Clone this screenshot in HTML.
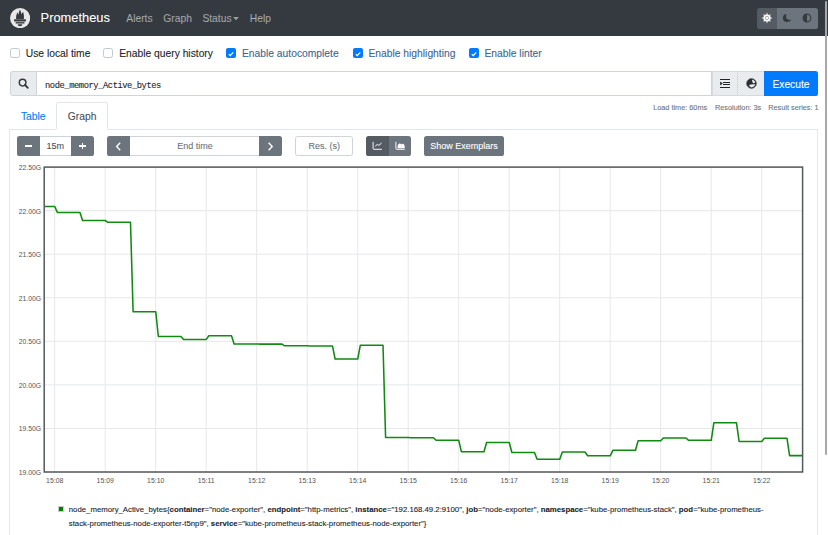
<!DOCTYPE html>
<html><head><meta charset="utf-8"><title>Prometheus Time Series Collection and Processing Server</title>
<style>
html,body{margin:0;padding:0;background:#fff;}
body{width:828px;height:535px;overflow:hidden;position:relative;font-family:"Liberation Sans",sans-serif;}
.t{position:absolute;line-height:1;white-space:nowrap;-webkit-text-stroke:0.1px currentColor;}
.b{position:absolute;box-sizing:border-box;}
svg{position:absolute;}
</style></head><body>
<div class="b" style="left:0.00px;top:0.00px;width:828.00px;height:36.00px;background:#343a40;"></div>
<svg style="left:10.1px;top:7.7px" width="20.2" height="20.2" viewBox="0 0 20 20">
<circle cx="10" cy="10" r="10" fill="#e8e8e8"/>
<path d="M6.1 10.9 C5.8 8.6 6.4 6.0 7.5 4.3 C7.6 5.3 8.0 6.1 8.5 6.7 C8.6 4.7 9.2 2.9 9.8 1.5 C10.5 2.9 11.2 4.5 11.4 6.3 C11.9 5.5 12.5 4.7 12.9 3.8 C13.7 5.6 14.1 8.4 13.7 10.9 Z" fill="#343a40"/>
<path d="M4.0 11.2 H15.8 L15.6 13.3 H4.2 Z" fill="#343a40"/>
<path d="M5.6 14.0 H14.3 V15.4 H5.6 Z" fill="#343a40"/>
<path d="M7.6 16.1 H12.3 C12.2 17.3 11.3 18.1 9.95 18.1 C8.6 18.1 7.7 17.3 7.6 16.1 Z" fill="#343a40"/>
</svg>
<div class="t" style="left:40.60px;top:12.11px;font-size:12.86px;color:#fff;font-weight:normal;font-family:'Liberation Sans', sans-serif;">Prometheus</div>
<div class="t" style="left:126.30px;top:14.49px;font-size:10.29px;color:rgba(255,255,255,.5);font-weight:normal;font-family:'Liberation Sans', sans-serif;">Alerts</div>
<div class="t" style="left:163.30px;top:14.49px;font-size:10.29px;color:rgba(255,255,255,.5);font-weight:normal;font-family:'Liberation Sans', sans-serif;">Graph</div>
<div class="t" style="left:202.40px;top:14.49px;font-size:10.29px;color:rgba(255,255,255,.5);font-weight:normal;font-family:'Liberation Sans', sans-serif;">Status</div>
<svg style="left:232.5px;top:17.0px" width="6" height="4" viewBox="0 0 6 4"><path d="M0 0 H6 L3 3.3 Z" fill="rgba(255,255,255,.5)"/></svg>
<div class="t" style="left:249.80px;top:14.49px;font-size:10.29px;color:rgba(255,255,255,.5);font-weight:normal;font-family:'Liberation Sans', sans-serif;">Help</div>
<div class="b" style="left:756.90px;top:8.10px;width:20.50px;height:20.70px;background:#545b62;border-radius:2.6px 0 0 2.6px;"></div>
<div class="b" style="left:777.40px;top:8.10px;width:40.60px;height:20.70px;background:#6c757d;border-radius:0 2.6px 2.6px 0;"></div>
<svg style="left:761px;top:12px" width="12" height="12" viewBox="0 0 12 12">
<g fill="#fff">
<circle cx="6" cy="6" r="3.6"/>
<path d="M6 0.8 L7 2.6 L5 2.6 Z M6 11.2 L7 9.4 L5 9.4 Z M0.8 6 L2.6 5 L2.6 7 Z M11.2 6 L9.4 5 L9.4 7 Z M2.3 2.3 L4.2 3.0 L3.0 4.2 Z M9.7 9.7 L7.8 9.0 L9.0 7.8 Z M9.7 2.3 L9.0 4.2 L7.8 3.0 Z M2.3 9.7 L3.0 7.8 L4.2 9.0 Z"/>
</g>
<circle cx="6" cy="6" r="1.9" fill="#8a9096"/>
<circle cx="6" cy="6" r="1.2" fill="#fff"/>
</svg>
<svg style="left:782px;top:12.8px" width="10" height="10" viewBox="0 0 10 10">
<defs><mask id="mm"><rect width="10" height="10" fill="#fff"/><circle cx="7.4" cy="3.4" r="3.3" fill="#000"/></mask></defs>
<circle cx="5" cy="5" r="4.1" fill="#343a40" mask="url(#mm)"/>
</svg>
<svg style="left:802px;top:13px" width="10" height="10" viewBox="0 0 10 10">
<circle cx="5" cy="5" r="3.9" fill="none" stroke="#343a40" stroke-width="1.1"/>
<path d="M5 1.1 A3.9 3.9 0 0 0 5 8.9 Z" fill="#343a40"/>
</svg>
<div class="b" style="left:9.90px;top:48.20px;width:10.30px;height:10.30px;background:#fff;border:0.8px solid #c3c8cd;border-radius:2.5px;"></div>
<div class="t" style="left:25.80px;top:48.79px;font-size:10.29px;color:#212529;font-weight:normal;font-family:'Liberation Sans', sans-serif;">Use local time</div>
<div class="b" style="left:103.20px;top:48.20px;width:10.30px;height:10.30px;background:#fff;border:0.8px solid #c3c8cd;border-radius:2.5px;"></div>
<div class="t" style="left:119.20px;top:48.79px;font-size:10.29px;color:#212529;font-weight:normal;font-family:'Liberation Sans', sans-serif;">Enable query history</div>
<div class="b" style="left:226.00px;top:48.20px;width:10.30px;height:10.30px;background:#007bff;border-radius:2px;"></div>
<svg style="left:228.40px;top:50.60px" width="6" height="6" viewBox="0 0 8 8"><path d="M1 4.2 L3 6.2 L7 1.8" fill="none" stroke="#fff" stroke-width="1.6"/></svg>
<div class="t" style="left:242.00px;top:48.79px;font-size:10.29px;color:#3b6694;font-weight:normal;font-family:'Liberation Sans', sans-serif;">Enable autocomplete</div>
<div class="b" style="left:352.50px;top:48.20px;width:10.30px;height:10.30px;background:#007bff;border-radius:2px;"></div>
<svg style="left:354.90px;top:50.60px" width="6" height="6" viewBox="0 0 8 8"><path d="M1 4.2 L3 6.2 L7 1.8" fill="none" stroke="#fff" stroke-width="1.6"/></svg>
<div class="t" style="left:368.50px;top:48.79px;font-size:10.29px;color:#3b6694;font-weight:normal;font-family:'Liberation Sans', sans-serif;">Enable highlighting</div>
<div class="b" style="left:468.50px;top:48.20px;width:10.30px;height:10.30px;background:#007bff;border-radius:2px;"></div>
<svg style="left:470.90px;top:50.60px" width="6" height="6" viewBox="0 0 8 8"><path d="M1 4.2 L3 6.2 L7 1.8" fill="none" stroke="#fff" stroke-width="1.6"/></svg>
<div class="t" style="left:484.50px;top:48.79px;font-size:10.29px;color:#3b6694;font-weight:normal;font-family:'Liberation Sans', sans-serif;">Enable linter</div>
<div class="b" style="left:9.90px;top:71.00px;width:26.80px;height:24.70px;background:#e9ecef;border:0.7px solid #ced4da;border-radius:2.6px 0 0 2.6px;"></div>
<svg style="left:17.5px;top:77.5px" width="11" height="11" viewBox="0 0 11 11">
<circle cx="4.6" cy="4.6" r="3.3" fill="none" stroke="#343a40" stroke-width="1.5"/>
<path d="M7 7 L9.8 9.8" stroke="#343a40" stroke-width="1.8" stroke-linecap="round"/>
</svg>
<div class="b" style="left:36.70px;top:71.00px;width:675.70px;height:24.70px;background:#fff;border:0.7px solid #ced4da;border-left:none;"></div>
<div class="t" style="left:45.00px;top:81.59px;font-size:8.75px;color:#212529;font-weight:normal;font-family:'Liberation Mono', monospace;letter-spacing:-0.42px;-webkit-text-stroke:0.1px currentColor;">node_memory_Active_bytes</div>
<div class="b" style="left:712.40px;top:71.00px;width:25.20px;height:24.70px;background:#e9ecef;border:0.7px solid #d6dadf;border-right:0.7px dotted #c4c9ce;"></div>
<div class="b" style="left:737.60px;top:71.00px;width:26.20px;height:24.70px;background:#e9ecef;border:0.7px solid #d6dadf;border-left:none;border-right:none;"></div>
<svg style="left:720px;top:78px" width="10" height="11" viewBox="0 0 10 11" shape-rendering="crispEdges">
<g fill="#212529">
<rect x="0.3" y="1" width="9.4" height="1"/>
<rect x="3.3" y="4" width="6.4" height="1"/>
<rect x="3.3" y="6" width="6.4" height="1"/>
<rect x="0.3" y="9" width="9.4" height="1"/>
</g>
<path d="M0.2 3.4 L2.8 5.5 L0.2 7.6 Z" fill="#212529" shape-rendering="auto"/>
</svg>
<svg style="left:745.5px;top:77.8px" width="11" height="11" viewBox="0 0 11 11">
<circle cx="5.5" cy="5.5" r="4.7" fill="#2b2f33" stroke="#2b2f33" stroke-width="0.9"/>
<path d="M5.9 1.6 C7.5 1.9 8.9 3.1 9.3 4.8 L6.9 5.3 C6.5 4.3 6.1 3.2 5.9 1.6 Z" fill="#e9ecef"/>
<path d="M3.0 7.0 C4.6 6.4 6.8 6.0 9.2 6.3 C8.8 8.0 7.2 9.3 5.4 9.4 C4.3 9.2 3.4 8.2 3.0 7.0 Z" fill="#e9ecef"/>
</svg>
<div class="b" style="left:763.80px;top:71.00px;width:54.50px;height:24.70px;background:#007bff;border-radius:0 2.6px 2.6px 0;"></div>
<div class="t" style="left:772.40px;top:79.89px;font-size:10.29px;color:#fff;font-weight:normal;font-family:'Liberation Sans', sans-serif;">Execute</div>
<div class="t" style="left:653.20px;top:103.82px;font-size:7.30px;color:#6c757d;font-weight:normal;font-family:'Liberation Sans', sans-serif;">Load time: 60ms</div>
<div class="t" style="left:715.00px;top:103.82px;font-size:7.30px;color:#6c757d;font-weight:normal;font-family:'Liberation Sans', sans-serif;">Resolution: 3s</div>
<div class="t" style="left:768.30px;top:103.82px;font-size:7.30px;color:#6c757d;font-weight:normal;font-family:'Liberation Sans', sans-serif;">Result series: 1</div>
<div class="b" style="left:9.20px;top:129.00px;width:808.80px;height:471.00px;border:0.8px solid #e6e9ec;border-top:none;"></div>
<div class="b" style="left:9.20px;top:128.70px;width:46.80px;height:0.80px;background:#e3e6e9;"></div>
<div class="b" style="left:107.70px;top:128.70px;width:710.30px;height:0.80px;background:#e3e6e9;"></div>
<div class="b" style="left:56.00px;top:102.30px;width:51.70px;height:27.20px;background:#fff;border:0.8px solid #e3e6e9;border-bottom:none;border-radius:2.6px 2.6px 0 0;"></div>
<div class="t" style="left:20.90px;top:111.89px;font-size:10.29px;color:#007bff;font-weight:normal;font-family:'Liberation Sans', sans-serif;">Table</div>
<div class="t" style="left:67.80px;top:111.89px;font-size:10.29px;color:#495057;font-weight:normal;font-family:'Liberation Sans', sans-serif;">Graph</div>
<div class="b" style="left:17.00px;top:136.00px;width:22.70px;height:19.80px;background:#6c757d;border-radius:2.6px 0 0 2.6px;"></div>
<div class="b" style="left:39.70px;top:136.00px;width:31.40px;height:19.80px;background:#fff;border:0.7px solid #ced4da;border-left:none;border-right:none;"></div>
<div class="b" style="left:71.10px;top:136.00px;width:22.60px;height:19.80px;background:#6c757d;border-radius:0 2.6px 2.6px 0;"></div>
<div class="b" style="left:24.50px;top:145.30px;width:7.70px;height:1.30px;background:#fff;"></div>
<div class="b" style="left:78.90px;top:145.40px;width:7.20px;height:1.20px;background:#fff;"></div>
<div class="b" style="left:81.90px;top:142.60px;width:1.20px;height:6.80px;background:#fff;"></div>
<div class="t" style="left:46.50px;top:141.68px;font-size:9.00px;color:#495057;font-weight:normal;font-family:'Liberation Sans', sans-serif;">15m</div>
<div class="b" style="left:106.80px;top:136.00px;width:23.20px;height:19.80px;background:#6c757d;border-radius:2.6px 0 0 2.6px;"></div>
<div class="b" style="left:130.00px;top:136.00px;width:129.40px;height:19.80px;background:#fff;border:0.7px solid #ced4da;border-left:none;border-right:none;"></div>
<div class="b" style="left:259.40px;top:136.00px;width:22.20px;height:19.80px;background:#6c757d;border-radius:0 2.6px 2.6px 0;"></div>
<svg style="left:114.8px;top:141.5px" width="7" height="9" viewBox="0 0 7 9"><path d="M5.2 0.8 L1.6 4.5 L5.2 8.2" fill="none" stroke="#fff" stroke-width="1.4"/></svg>
<svg style="left:267px;top:141.5px" width="7" height="9" viewBox="0 0 7 9"><path d="M1.6 0.8 L5.2 4.5 L1.6 8.2" fill="none" stroke="#fff" stroke-width="1.4"/></svg>
<div class="t" style="left:177.20px;top:142.18px;font-size:9.00px;color:#6c757d;font-weight:normal;font-family:'Liberation Sans', sans-serif;">End time</div>
<div class="b" style="left:295.30px;top:136.00px;width:57.70px;height:19.80px;background:#fff;border:0.7px solid #ced4da;border-radius:2.6px;"></div>
<div class="t" style="left:308.50px;top:142.48px;font-size:9.00px;color:#6c757d;font-weight:normal;font-family:'Liberation Sans', sans-serif;">Res. (s)</div>
<div class="b" style="left:366.20px;top:136.00px;width:22.90px;height:19.80px;background:#545b62;border-radius:2.6px 0 0 2.6px;"></div>
<div class="b" style="left:389.10px;top:136.00px;width:22.30px;height:19.80px;background:#6c757d;border-radius:0 2.6px 2.6px 0;"></div>
<svg style="left:362px;top:132px" width="54" height="28" viewBox="0 0 54 28">
<path d="M11.1 9.8 V16.6 Q11.1 17.3 11.8 17.3 H19.9" fill="none" stroke="#fff" stroke-width="0.95"/>
<path d="M13.2 14.2 L15.2 12.5 L16.9 13.4 L19.6 11.0" fill="none" stroke="#fff" stroke-width="0.95" stroke-linejoin="round"/>
<path d="M33.9 9.8 V16.6 Q33.9 17.3 34.6 17.3 H42.7" fill="none" stroke="#fff" stroke-width="0.95"/>
<path d="M35.6 16.2 V14.6 C35.6 13.4 36.4 11.6 37.8 11.6 C38.8 11.6 39.2 12.4 39.6 12.6 C40.0 12.0 40.6 11.6 41.2 11.8 C42.2 12.2 42.6 13.6 42.7 14.6 V16.2 Z" fill="#fff"/>
</svg>
<div class="b" style="left:424.40px;top:136.00px;width:79.50px;height:19.80px;background:#6c757d;border-radius:2.6px;"></div>
<div class="t" style="left:430.30px;top:142.48px;font-size:9.00px;color:#fff;font-weight:normal;font-family:'Liberation Sans', sans-serif;">Show Exemplars</div>
<svg style="left:0;top:0" width="828" height="535" viewBox="0 0 828 535">
<line x1="54.70" y1="167.1" x2="54.70" y2="472.0" stroke="#e5e7e9" stroke-width="1"/>
<line x1="105.20" y1="167.1" x2="105.20" y2="472.0" stroke="#e5e7e9" stroke-width="1"/>
<line x1="155.70" y1="167.1" x2="155.70" y2="472.0" stroke="#e5e7e9" stroke-width="1"/>
<line x1="206.20" y1="167.1" x2="206.20" y2="472.0" stroke="#e5e7e9" stroke-width="1"/>
<line x1="256.70" y1="167.1" x2="256.70" y2="472.0" stroke="#e5e7e9" stroke-width="1"/>
<line x1="307.20" y1="167.1" x2="307.20" y2="472.0" stroke="#e5e7e9" stroke-width="1"/>
<line x1="357.70" y1="167.1" x2="357.70" y2="472.0" stroke="#e5e7e9" stroke-width="1"/>
<line x1="408.20" y1="167.1" x2="408.20" y2="472.0" stroke="#e5e7e9" stroke-width="1"/>
<line x1="458.70" y1="167.1" x2="458.70" y2="472.0" stroke="#e5e7e9" stroke-width="1"/>
<line x1="509.20" y1="167.1" x2="509.20" y2="472.0" stroke="#e5e7e9" stroke-width="1"/>
<line x1="559.70" y1="167.1" x2="559.70" y2="472.0" stroke="#e5e7e9" stroke-width="1"/>
<line x1="610.20" y1="167.1" x2="610.20" y2="472.0" stroke="#e5e7e9" stroke-width="1"/>
<line x1="660.70" y1="167.1" x2="660.70" y2="472.0" stroke="#e5e7e9" stroke-width="1"/>
<line x1="711.20" y1="167.1" x2="711.20" y2="472.0" stroke="#e5e7e9" stroke-width="1"/>
<line x1="761.70" y1="167.1" x2="761.70" y2="472.0" stroke="#e5e7e9" stroke-width="1"/>
<line x1="44.2" y1="167.10" x2="802.6" y2="167.10" stroke="#e5e7e9" stroke-width="1"/>
<line x1="44.2" y1="210.66" x2="802.6" y2="210.66" stroke="#e5e7e9" stroke-width="1"/>
<line x1="44.2" y1="254.21" x2="802.6" y2="254.21" stroke="#e5e7e9" stroke-width="1"/>
<line x1="44.2" y1="297.77" x2="802.6" y2="297.77" stroke="#e5e7e9" stroke-width="1"/>
<line x1="44.2" y1="341.33" x2="802.6" y2="341.33" stroke="#e5e7e9" stroke-width="1"/>
<line x1="44.2" y1="384.89" x2="802.6" y2="384.89" stroke="#e5e7e9" stroke-width="1"/>
<line x1="44.2" y1="428.44" x2="802.6" y2="428.44" stroke="#e5e7e9" stroke-width="1"/>
<line x1="44.2" y1="472.00" x2="802.6" y2="472.00" stroke="#e5e7e9" stroke-width="1"/>
<path d="M44.80 206.50 L54.75 206.50 L57.35 212.40 L80.00 212.40 L82.60 220.50 L105.25 220.50 L107.85 222.30 L130.50 222.30 L133.10 311.70 L155.75 311.70 L158.35 336.50 L181.00 336.50 L183.60 339.40 L206.25 339.40 L208.85 335.70 L231.50 335.70 L234.10 344.00 L256.75 344.00 L259.35 344.10 L282.00 344.10 L284.60 345.80 L307.25 345.80 L309.85 345.90 L332.50 345.90 L335.10 359.00 L357.75 359.00 L360.35 345.20 L383.00 345.20 L385.60 437.50 L408.25 437.50 L410.85 437.80 L433.50 437.80 L436.10 440.30 L458.75 440.30 L461.35 451.70 L484.00 451.70 L486.60 442.50 L509.25 442.50 L511.85 452.50 L534.50 452.50 L537.10 459.20 L559.75 459.20 L562.35 452.00 L585.00 452.00 L587.60 455.80 L610.25 455.80 L612.85 450.30 L635.50 450.30 L638.10 440.80 L660.75 440.80 L663.35 438.00 L686.00 438.00 L688.60 440.30 L711.25 440.30 L713.85 422.80 L736.50 422.80 L739.10 441.40 L761.75 441.40 L764.35 438.30 L787.00 438.30 L789.60 455.60 L802.00 455.60" fill="none" stroke="#108a10" stroke-width="1.55" stroke-linejoin="round"/>
<rect x="44.2" y="167.1" width="758.40" height="304.90" fill="none" stroke="#56595c" stroke-width="1.5"/>
<text x="41.2" y="170.05" text-anchor="end" font-family="Liberation Sans" font-size="6.85" fill="#545454">22.50G</text>
<text x="41.2" y="213.61" text-anchor="end" font-family="Liberation Sans" font-size="6.85" fill="#545454">22.00G</text>
<text x="41.2" y="257.16" text-anchor="end" font-family="Liberation Sans" font-size="6.85" fill="#545454">21.50G</text>
<text x="41.2" y="300.72" text-anchor="end" font-family="Liberation Sans" font-size="6.85" fill="#545454">21.00G</text>
<text x="41.2" y="344.28" text-anchor="end" font-family="Liberation Sans" font-size="6.85" fill="#545454">20.50G</text>
<text x="41.2" y="387.84" text-anchor="end" font-family="Liberation Sans" font-size="6.85" fill="#545454">20.00G</text>
<text x="41.2" y="431.39" text-anchor="end" font-family="Liberation Sans" font-size="6.85" fill="#545454">19.50G</text>
<text x="41.2" y="474.95" text-anchor="end" font-family="Liberation Sans" font-size="6.85" fill="#545454">19.00G</text>
<text x="54.70" y="482.7" text-anchor="middle" font-family="Liberation Sans" font-size="6.9" fill="#545454">15:08</text>
<text x="105.20" y="482.7" text-anchor="middle" font-family="Liberation Sans" font-size="6.9" fill="#545454">15:09</text>
<text x="155.70" y="482.7" text-anchor="middle" font-family="Liberation Sans" font-size="6.9" fill="#545454">15:10</text>
<text x="206.20" y="482.7" text-anchor="middle" font-family="Liberation Sans" font-size="6.9" fill="#545454">15:11</text>
<text x="256.70" y="482.7" text-anchor="middle" font-family="Liberation Sans" font-size="6.9" fill="#545454">15:12</text>
<text x="307.20" y="482.7" text-anchor="middle" font-family="Liberation Sans" font-size="6.9" fill="#545454">15:13</text>
<text x="357.70" y="482.7" text-anchor="middle" font-family="Liberation Sans" font-size="6.9" fill="#545454">15:14</text>
<text x="408.20" y="482.7" text-anchor="middle" font-family="Liberation Sans" font-size="6.9" fill="#545454">15:15</text>
<text x="458.70" y="482.7" text-anchor="middle" font-family="Liberation Sans" font-size="6.9" fill="#545454">15:16</text>
<text x="509.20" y="482.7" text-anchor="middle" font-family="Liberation Sans" font-size="6.9" fill="#545454">15:17</text>
<text x="559.70" y="482.7" text-anchor="middle" font-family="Liberation Sans" font-size="6.9" fill="#545454">15:18</text>
<text x="610.20" y="482.7" text-anchor="middle" font-family="Liberation Sans" font-size="6.9" fill="#545454">15:19</text>
<text x="660.70" y="482.7" text-anchor="middle" font-family="Liberation Sans" font-size="6.9" fill="#545454">15:20</text>
<text x="711.20" y="482.7" text-anchor="middle" font-family="Liberation Sans" font-size="6.9" fill="#545454">15:21</text>
<text x="761.70" y="482.7" text-anchor="middle" font-family="Liberation Sans" font-size="6.9" fill="#545454">15:22</text>
</svg>
<div class="b" style="left:58.40px;top:505.60px;width:6.00px;height:6.00px;background:#008000;border:0.7px solid #ccc;"></div>
<div class="t" style="left:68.80px;top:506.01px;font-size:7.79px;color:#212529;font-weight:normal;font-family:'Liberation Sans', sans-serif;">node_memory_Active_bytes{<b>container</b>="node-exporter", <b>endpoint</b>="http-metrics", <b>instance</b>="192.168.49.2:9100", <b>job</b>="node-exporter", <b>namespace</b>="kube-prometheus-stack", <b>pod</b>="kube-prometheus-</div>
<div class="t" style="left:68.80px;top:519.61px;font-size:7.79px;color:#212529;font-weight:normal;font-family:'Liberation Sans', sans-serif;">stack-prometheus-node-exporter-t5np9", <b>service</b>="kube-prometheus-stack-prometheus-node-exporter"}</div>
<div class="b" style="left:825.00px;top:1.00px;width:2.30px;height:454.00px;background:#a8a8a8;border-radius:1px;"></div>
</body></html>
